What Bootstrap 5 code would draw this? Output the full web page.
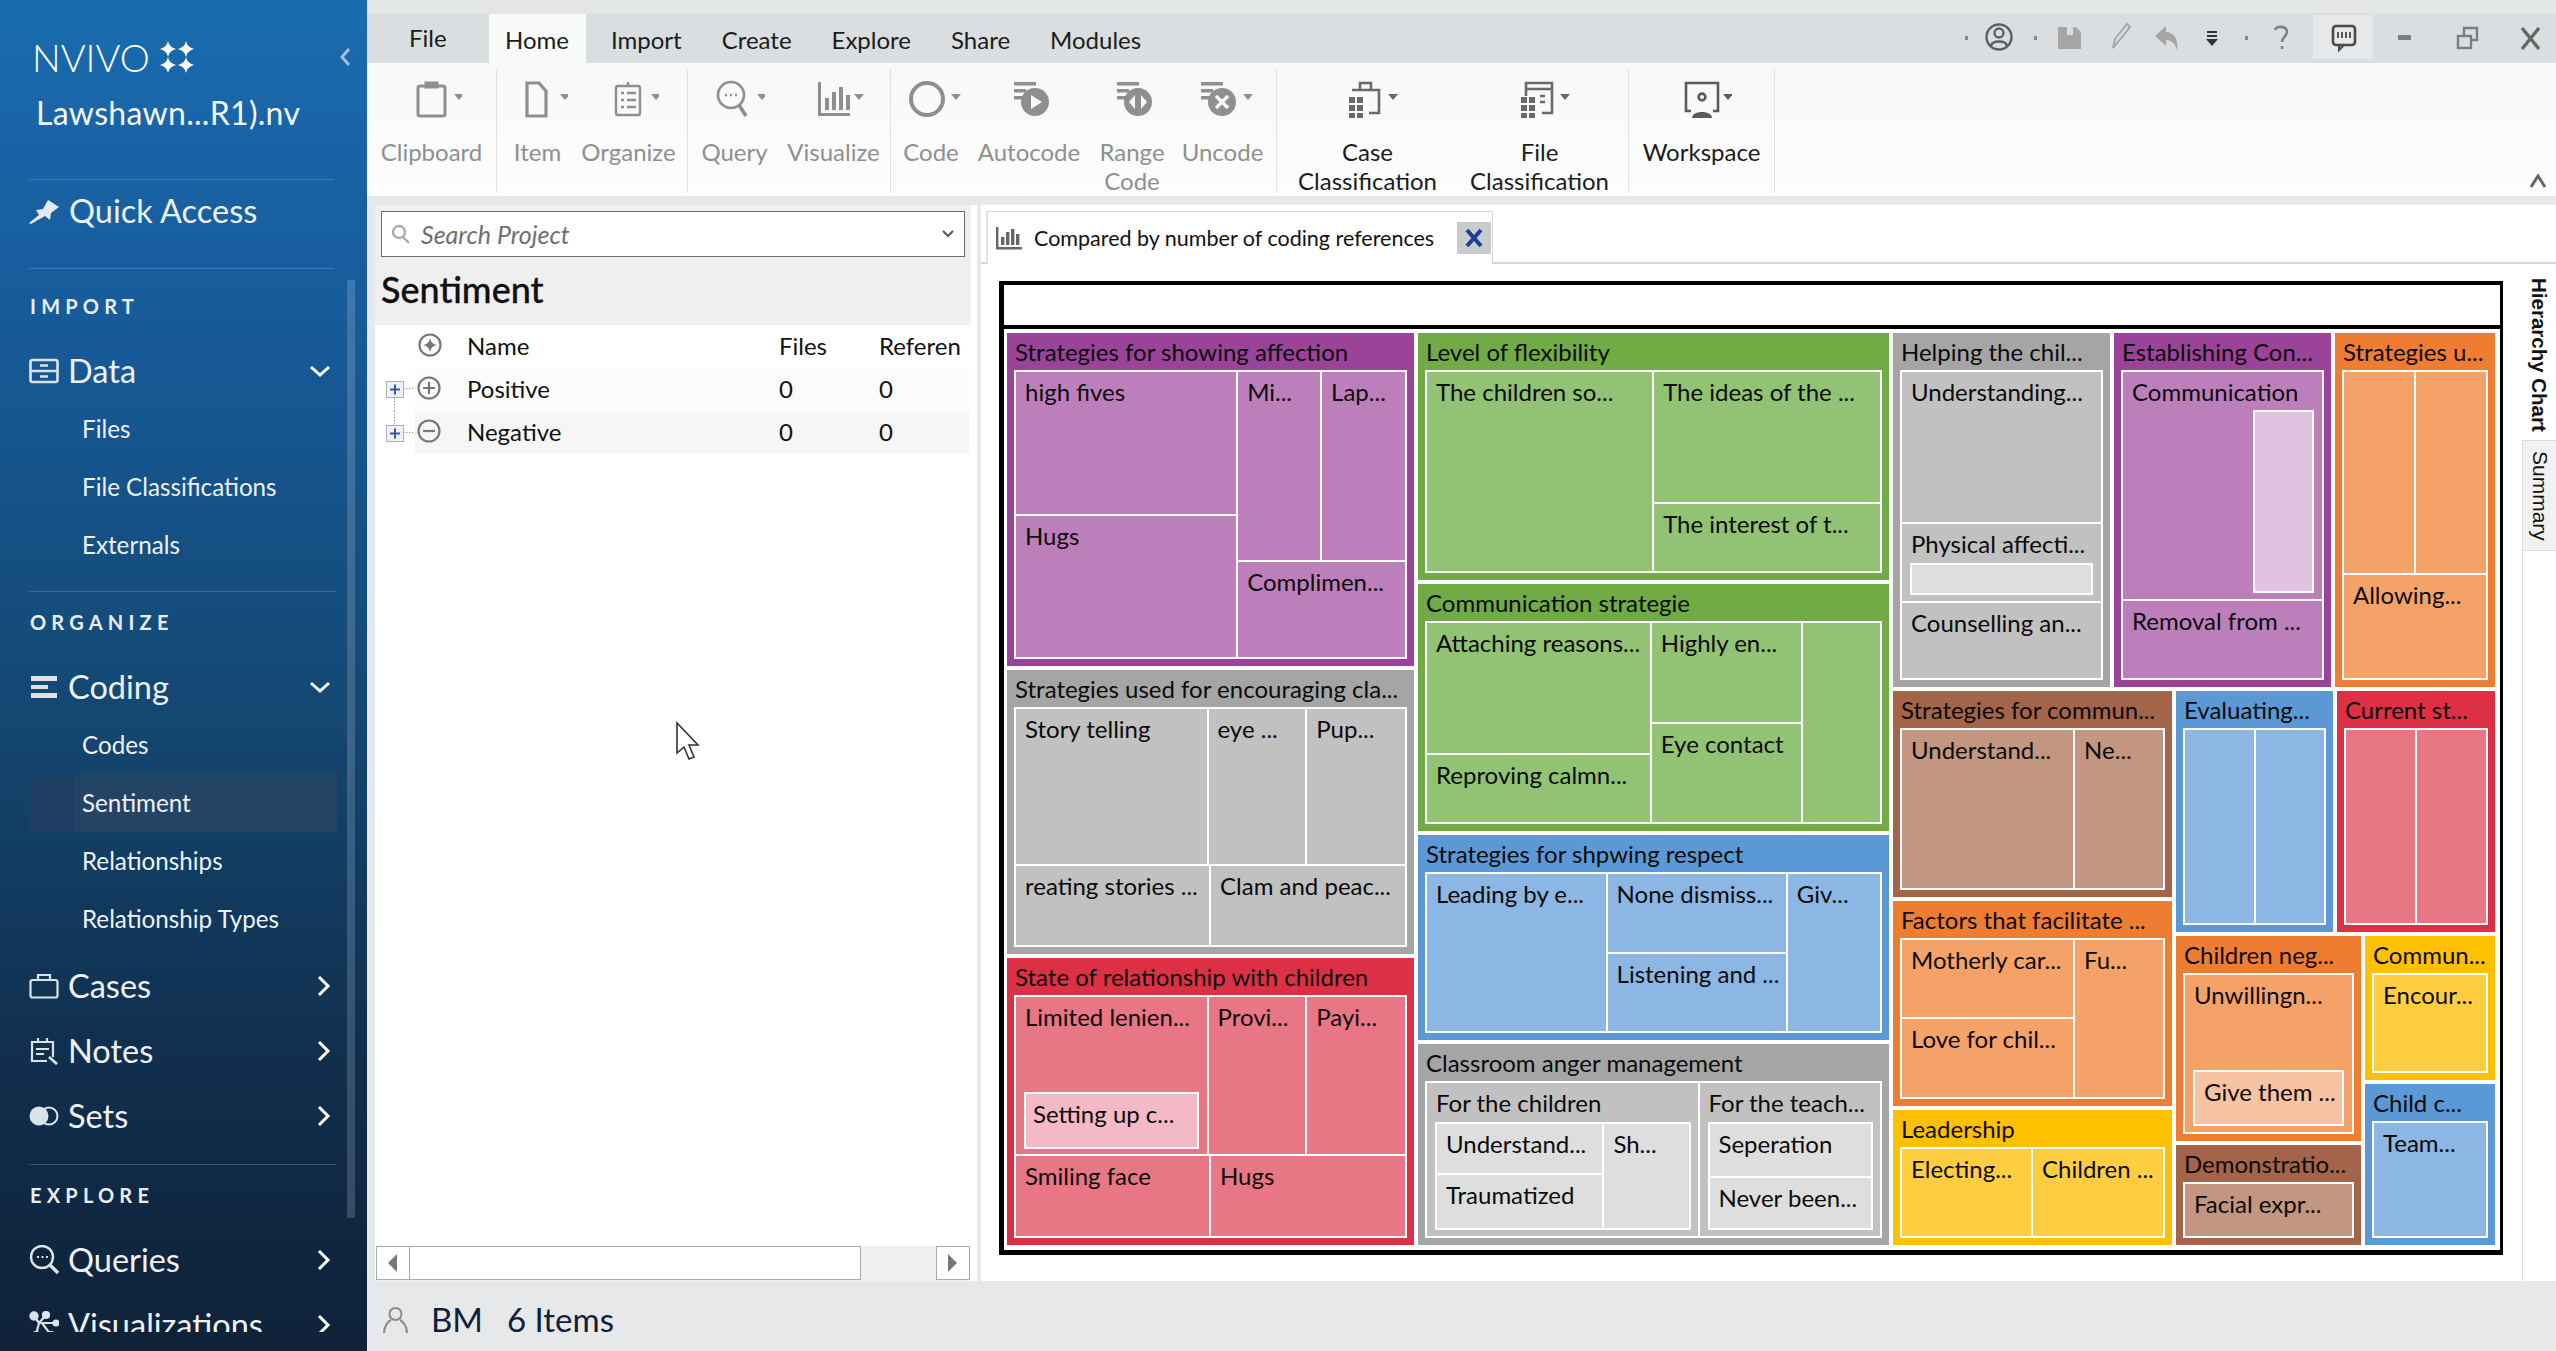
<!DOCTYPE html>
<html lang="en">
<head>
<meta charset="utf-8">
<title>NVivo</title>
<link href="https://cdn.jsdelivr.net/npm/bootstrap@5.3.0/dist/css/bootstrap.min.css" rel="stylesheet">
<style>
html,body{height:100%;margin:0;overflow:hidden}
body{font-family:"Lato","Liberation Sans",sans-serif;font-size:24px;color:#111;background:#e7e8ea}
.app-shell{width:2556px;height:1351px}
/* sidebar */
.sb{width:367px;flex:0 0 367px;height:1351px;color:#eef2f6;background:linear-gradient(180deg,#1a6bb0 0,#175a98 25%,#144873 52%,#112f4e 78%,#0f2238 100%);position:relative;overflow:hidden}
.sb-brand{height:180px;margin:0 33px 0 29px;border-bottom:1px solid rgba(255,255,255,.18);position:relative}
.sb-logo{position:absolute;left:3px;top:34px;font-size:38px;font-weight:300;color:#fff;line-height:46px;letter-spacing:0}
.sb-stars{position:absolute;left:130px;top:41px}
.sb-file{position:absolute;left:7px;top:90px;font-size:32px;line-height:46px;color:#f4f7fa;letter-spacing:.3px;white-space:nowrap}
.sb-collapse{position:absolute;left:309px;top:46px}
.sb-quick{height:89px;margin:0 33px 0 29px;padding-bottom:26px;border-bottom:1px solid rgba(255,255,255,.18);font-size:32.5px;gap:10px}
.sb-nav{margin-left:29px;width:308px;height:1063px;overflow:hidden}
.sb-lbl{height:30px;flex:0 0 30px;line-height:30px;margin:22px 0 23px 1px;font-size:20px;letter-spacing:5.2px;font-weight:700;color:#e8eef3}
.sb-hr{border-top:1px solid rgba(255,255,255,.16);margin-top:6px}
.sb-hr.sb-hr-lo{margin-top:10px}
.sb-hr+.sb-lbl{margin-top:15px}
.sb-main{height:54px;flex:0 0 54px;margin-bottom:11px;font-size:32.5px;line-height:54px;white-space:nowrap}
.sb-main .sb-ic{width:30px;flex:0 0 30px;margin-right:9px}
.sb-main .sb-arrow{margin-left:auto;margin-right:6px}
.sb-subs{margin:-9px 0 11px}
.sb-sub{height:58px;line-height:58px;padding-left:53px;font-size:24.2px;color:#eef2f6}
.sb-sub.sel{background:linear-gradient(90deg,#1e3f63 0,#1e3f63 46px,#244466 46px)}
.sb-bar{position:absolute;left:347px;top:280px;width:8px;height:938px;background:rgba(255,255,255,.17)}
/* top */
.rt{width:2189px;flex:0 0 2189px}
.rt-top{height:63px;background:linear-gradient(180deg,#e3e5e6 0,#e3e5e6 13px,#dbdee0 14px,#dbdee0 100%)}
.rt-tab{height:49px;margin-top:14px;line-height:52px;color:#1c1c1c;white-space:nowrap}
.rt-file{margin-left:42px;width:80px;line-height:48px}
.rt-home{width:97px;padding-left:16px;background:#f9fafa}
.rt-import{margin-left:25px}
.rt-gap{margin-left:40px}
.rt-strip{margin-left:auto;flex:0 0 606px}
.rb{height:133px;background:linear-gradient(180deg,#f7f8f8,#fdfdfd);position:relative}
.rb-group{height:124px;margin-top:6px;border-right:1px solid #dfe1e2}
.rb-btn{text-align:center;color:#8f8f8f;padding-top:11px;line-height:29px;height:124px}
.rb-btn svg{display:block;margin:0 auto 19px}
.rb-btn.on{color:#1c1c1c}
.w130{width:129px}.w82{width:82px}.w100{width:100px}.w93{width:93px}.w105{width:105px}.w80{width:80px}.w116{width:116px}.w90{width:90px}.w91{width:91px}.w181{width:181px}.w163{width:163px}.w146{width:146px}
.gp-a{width:129.5px}.gp-b{width:191.5px}.gp-c{width:203px}.gp-d{width:386px}.gp-e{width:352px}.gp-f{width:146px}
.rb-up{position:absolute;right:9px;top:110px}
.rb-space{height:9px;background:#e6e8e9}
/* body */
.bd{height:1076px}
.lp{width:602px;margin-left:8px;background:#fff;position:relative}
.lp-head{height:120px;margin-right:6px;background:#efefef;padding:6px 6px 0}
.lp-search{height:46px;background:#fff;border:1.5px solid #6b6b6b;font-style:italic;font-size:25px;color:#6f6f6f;line-height:42px}
.lp-search svg{margin:0 10px 0 9px}
.lp-title{font-size:36px;font-weight:500;color:#111;line-height:44px;margin-top:10px;-webkit-text-stroke:.3px #111}
.lp-row{height:43px;line-height:43px;margin-right:8px}
.lp-tree{width:40px;flex:0 0 40px}
.lp-cells{flex:1;padding-bottom:3px}
.lp-ic{width:30px;flex:0 0 30px;margin-right:22px}
.lp-nm{width:312px;flex:0 0 312px}
.lp-fl{width:100px;flex:0 0 100px}
.lp-bg1{background:#fbfbfb}.lp-bg2{background:#f6f6f6}
.lp-list{flex:1}
.lp-sc{height:35px;margin:0 7px 0 1px;background:#efefef}
.lp-sc-b{width:34px;height:34px;border:1px solid #aaa;background:#fff;flex:0 0 34px}
.lp-sc-t{width:452px;height:34px;border:1px solid #aaa;background:#fff;flex:0 0 452px;margin-left:-1px}
.lp-cur{position:absolute;left:300px;top:516px}
.mp{margin-left:4px;width:1575px;background:#fff}
.mp-tabs{height:59px;border-bottom:2px solid #d5d6d7;padding-left:5px}
.mp-tab{width:507px;height:53px;margin-top:6px;border:1px solid #d5d6d7;border-bottom:0;border-left:2px solid #e3e3e3;background:#fff;margin-bottom:-2px;font-size:21.5px;color:#111;padding-left:7px}
.mp-tab svg{margin-right:11px}
.mp-x{width:34px;height:32px;background:#c9cbcd;margin-left:auto;margin-right:1px}
.mp-x svg{margin-right:0}
.mp-main{height:1017px}
.tm-frame{width:1504px;height:974px;margin:17px 0 0 18px;border-style:solid;border-color:#000;border-width:4px 3px 5px 5px;background:#fff}
.tm-head{height:44px;border-bottom:4px solid #000;box-sizing:border-box}
.tm-body{padding:4px 5px 5px 3px;gap:4px;height:921px}
.tmc{gap:4px}
.tr-g{padding:0 7px 7px;display:flex;flex-direction:column;background:var(--g);flex:none;overflow:hidden}
.tr-t{height:37px;flex:0 0 37px;line-height:37px;padding-left:1px;white-space:nowrap;overflow:hidden;color:#0b0b0b}
.tr-in{flex:1 1 0;min-height:0;border:2px solid #fff;background:#fff;display:flex;gap:2px}
.tv,.th{display:flex;gap:2px;min-width:0;min-height:0}
.tv{flex-direction:column}
.tc{background:var(--c);padding:5px 9px 0;line-height:29px;white-space:nowrap;overflow:hidden;min-width:0;min-height:0;display:flex;flex-direction:column;color:#0b0b0b}
.tr-in.tv{flex-direction:column}
.tn{border:2.5px solid #fff;background:var(--l);padding:5px 7px 0;white-space:nowrap;overflow:hidden;box-sizing:border-box}
.tn-set{margin:auto -1px 5px -1px;height:57px;padding-top:5px}
.tn-com{margin:4px -1px 6px auto;width:61px;flex:1}
.tn-phy{margin:5px -1px 6px;flex:1}
.tn-give{margin:auto -1px 6px;height:56px;padding-top:5px;padding-left:9px}
.tc-sub{padding-bottom:6px}
.tc-sub .tsb{flex:1;min-height:0;margin-top:5px;margin-right:-2px;margin-left:-1px;background:#fff;border:2px solid #fff;display:flex;gap:2px}
.tc-sub .tc{--c:var(--l)}
.c-pur{--g:#9a4399;--c:#bd7fbc;--l:#e3c1e1}
.c-gry{--g:#a5a5a5;--c:#c1c1c1;--l:#dedede}
.c-grn{--g:#70ab45;--c:#92c273;--l:#c9e0b8}
.c-red{--g:#dd3044;--c:#e87685;--l:#f4b9c6}
.c-org{--g:#ef7d31;--c:#f4a268;--l:#f8c3a2}
.c-blu{--g:#5b99d6;--c:#8cb6e3;--l:#c5daf1}
.c-brn{--g:#a3644a;--c:#c29680;--l:#e0cabf}
.c-yel{--g:#ffc000;--c:#ffce40;--l:#ffe69f}
.sd{width:34px;flex:0 0 34px;margin-left:19px;font-family:"Liberation Sans",sans-serif;color:#111}
.sd-a{height:176px;writing-mode:vertical-rl;padding-top:14px;font-weight:700;font-size:20.5px;line-height:34px;white-space:nowrap;text-align:left;border-left:1px solid transparent}
.sd-b{height:111px;writing-mode:vertical-rl;padding-top:10px;font-size:21px;line-height:32px;white-space:nowrap;background:#f1f1f1;border:1px solid #dcdcdc;border-right:0}
.sd-c{flex:1;border-left:1px solid #dcdcdc}
.st{height:70px;font-size:33px;color:#0f1f3a;padding:8px 0 0 16px}
.st svg{margin-right:23px}
.st span+span{margin-left:24px}
</style>
</head>
<body>
<div class="app-shell d-flex">
  <aside class="sb">
    <div class="sb-brand">
      <span class="sb-logo">NVIVO</span>
      <svg class="sb-stars" width="36" height="32" viewBox="0 0 36 32" fill="#fff"><path d="M9 0Q10 6 17 8Q10 10 9 16Q8 10 1 8Q8 6 9 0z"/><path d="M27 0Q28 6 35 8Q28 10 27 16Q26 10 19 8Q26 6 27 0z"/><path d="M9 16Q10 22 17 24Q10 26 9 32Q8 26 1 24Q8 22 9 16z"/><path d="M27 16Q28 22 35 24Q28 26 27 32Q26 26 19 24Q26 22 27 16z"/></svg>
      <span class="sb-file">Lawshawn...R1).nv</span>
      <svg class="sb-collapse" width="14" height="22" viewBox="0 0 14 22" fill="none" stroke="#a6bfd6" stroke-width="3"><path d="M11 3 4 11l7 8"/></svg>
    </div>
    <div class="sb-quick d-flex align-items-center">
      <svg width="30" height="26" viewBox="0 0 30 26" fill="#e4e9ee"><path d="M0 25 10 17 7 12 14 11 19 2 30 9 22 15 21 22 16 18 2 26z"/></svg>
      <span>Quick Access</span>
    </div>
    <div class="sb-nav d-flex flex-column">
      <div class="sb-lbl">IMPORT</div>
      <div class="sb-main d-flex align-items-center">
        <svg class="sb-ic" height="26" viewBox="0 0 30 26" fill="none" stroke="#dbe3ea" stroke-width="2.6"><rect x="1.5" y="2" width="27" height="22" rx="2"/><path d="M2 13h26M11 7.5h8M11 18.5h8"/></svg>
        <span>Data</span>
        <svg class="sb-arrow" width="22" height="14" viewBox="0 0 22 14" fill="none" stroke="#fff" stroke-width="3"><path d="M2 3l9 8 9-8"/></svg>
      </div>
      <div class="sb-subs">
        <div class="sb-sub">Files</div>
        <div class="sb-sub">File Classifications</div>
        <div class="sb-sub">Externals</div>
      </div>
      <div class="sb-hr"></div>
      <div class="sb-lbl">ORGANIZE</div>
      <div class="sb-main d-flex align-items-center">
        <svg class="sb-ic" height="24" viewBox="0 0 30 24" fill="#dbe3ea"><rect x="2" y="1" width="26" height="5"/><rect x="2" y="10" width="17" height="4"/><rect x="2" y="18" width="26" height="5"/></svg>
        <span>Coding</span>
        <svg class="sb-arrow" width="22" height="14" viewBox="0 0 22 14" fill="none" stroke="#fff" stroke-width="3"><path d="M2 3l9 8 9-8"/></svg>
      </div>
      <div class="sb-subs">
        <div class="sb-sub">Codes</div>
        <div class="sb-sub sel">Sentiment</div>
        <div class="sb-sub">Relationships</div>
        <div class="sb-sub">Relationship Types</div>
      </div>
      <div class="sb-main d-flex align-items-center">
        <svg class="sb-ic" height="26" viewBox="0 0 30 26" fill="none" stroke="#dbe3ea" stroke-width="2.2"><rect x="1.5" y="7" width="27" height="17.5" rx="2"/><path d="M9 7V2h12v5"/></svg>
        <span>Cases</span>
        <svg class="sb-arrow" width="14" height="22" viewBox="0 0 14 22" fill="none" stroke="#fff" stroke-width="3"><path d="M2 2l9 9-9 9"/></svg>
      </div>
      <div class="sb-main d-flex align-items-center">
        <svg class="sb-ic" height="28" viewBox="0 0 30 28" fill="none" stroke="#dbe3ea" stroke-width="2.2"><path d="M24 20V5H3v19h15M9 1v5M18 1v5M7 12h13M7 17h8"/><path d="M20 20l8 7" stroke-width="2.8"/></svg>
        <span>Notes</span>
        <svg class="sb-arrow" width="14" height="22" viewBox="0 0 14 22" fill="none" stroke="#fff" stroke-width="3"><path d="M2 2l9 9-9 9"/></svg>
      </div>
      <div class="sb-main d-flex align-items-center">
        <svg class="sb-ic" height="20" viewBox="0 0 30 20" fill="none" stroke="#dbe3ea" stroke-width="2"><circle cx="20" cy="10" r="8.5"/><circle cx="10" cy="10" r="9.5" fill="#dbe3ea" stroke="none"/></svg>
        <span>Sets</span>
        <svg class="sb-arrow" width="14" height="22" viewBox="0 0 14 22" fill="none" stroke="#fff" stroke-width="3"><path d="M2 2l9 9-9 9"/></svg>
      </div>
      <div class="sb-hr sb-hr-lo"></div>
      <div class="sb-lbl">EXPLORE</div>
      <div class="sb-main d-flex align-items-center">
        <svg class="sb-ic" height="30" viewBox="0 0 30 30" fill="none" stroke="#dbe3ea" stroke-width="2.4"><circle cx="13" cy="12" r="11"/><path d="M21 20l8 8" stroke-width="3.4"/><path d="M8 12h2M12.5 12h2M17 12h2" stroke-width="2.2"/></svg>
        <span>Queries</span>
        <svg class="sb-arrow" width="14" height="22" viewBox="0 0 14 22" fill="none" stroke="#fff" stroke-width="3"><path d="M2 2l9 9-9 9"/></svg>
      </div>
      <div class="sb-main d-flex align-items-center">
        <svg class="sb-ic" height="28" viewBox="0 0 30 28" fill="#dbe3ea" stroke="#dbe3ea" stroke-width="2.2"><circle cx="5" cy="5" r="3.6"/><circle cx="17" cy="4" r="3"/><circle cx="27" cy="12" r="2.5"/><circle cx="7" cy="24" r="3"/><circle cx="22" cy="24" r="3"/><path d="M5 5l5 7 7-8M10 12h17M10 12l-3 12M13 12l9 12" fill="none"/></svg>
        <span>Visualizations</span>
        <svg class="sb-arrow" width="14" height="22" viewBox="0 0 14 22" fill="none" stroke="#fff" stroke-width="3"><path d="M2 2l9 9-9 9"/></svg>
      </div>
    </div>
    <div class="sb-bar"></div>
  </aside>

  <div class="rt d-flex flex-column">
    <div class="rt-top d-flex">
      <div class="rt-tab rt-file">File</div>
      <div class="rt-tab rt-home">Home</div>
      <div class="rt-tab rt-import">Import</div>
      <div class="rt-tab rt-gap">Create</div>
      <div class="rt-tab rt-gap">Explore</div>
      <div class="rt-tab rt-gap">Share</div>
      <div class="rt-tab rt-gap">Modules</div>
      <svg class="rt-strip" width="606" height="63" viewBox="1950 0 606 63">
        <rect x="2313" y="15" width="60" height="44" fill="#e6e8e9"/>
        <g fill="#8a8a8a"><rect x="1965" y="36" width="3" height="4"/><rect x="2034" y="36" width="3" height="4"/><rect x="2245" y="36" width="3" height="4"/></g>
        <g fill="none" stroke="#5f5f5f" stroke-width="2.4"><circle cx="1999" cy="37" r="12.5"/><circle cx="1999" cy="33" r="4.5"/><path d="M1991 46c1-6 15-6 16 0"/></g>
        <path d="M2058 27h18l5 5v17h-23z" fill="#a6a6a6"/><rect x="2067" y="27" width="6" height="8" fill="#dbdee0"/>
        <path d="M2113 48l2-9 12-15 3 3-12 15z" fill="none" stroke="#a6a6a6" stroke-width="2"/>
        <path d="M2155 36l11-10v6c8 0 13 8 11 18-2-7-6-10-11-10v6z" fill="#a6a6a6"/>
        <path d="M2207 31h10v2h-10zM2207 35h10v2h-10zM2206 39h12l-6 7z" fill="#333"/>
        <path d="M2275 30c2-5 12-4 12 2 0 4-5 5-5 10M2282 46v3" fill="none" stroke="#808080" stroke-width="2.6"/>
        <rect x="2333" y="26" width="22" height="19" rx="3" fill="none" stroke="#4a4a4a" stroke-width="2.6"/><path d="M2339 45v5l5-5" fill="none" stroke="#4a4a4a" stroke-width="2"/><path d="M2338 32v6M2342 32v6M2346 32v6M2350 32v6" stroke="#4a4a4a" stroke-width="1.8"/>
        <rect x="2398" y="35" width="13" height="5" fill="#7d7d7d"/>
        <g fill="none" stroke="#7d7d7d" stroke-width="2.4"><rect x="2458" y="36" width="13" height="12"/><path d="M2464 35v-7h13v12h-6"/></g>
        <path d="M2522 28l17 21M2539 28l-17 21" stroke="#666" stroke-width="3.4" fill="none"/>
      </svg>
    </div>

    <div class="rb d-flex">
      <div class="rb-group gp-a"><div class="rb-btn w130">
        <svg width="60" height="38" viewBox="0 0 60 38" fill="none" stroke="#8f8f8f" stroke-width="3"><rect x="16" y="6" width="27" height="30" rx="2"/><path d="M24 7V3h11v4z" fill="#8f8f8f"/><path d="M52 14h10l-5 6z" fill="#8f8f8f" stroke="none"/></svg>Clipboard</div></div>
      <div class="rb-group gp-b d-flex">
        <div class="rb-btn w82"><svg width="60" height="38" viewBox="0 0 60 38" fill="none" stroke="#8f8f8f" stroke-width="3.2"><path d="M19 3h12l7 8v25H19z"/><path d="M52 14h10l-5 6z" fill="#8f8f8f" stroke="none"/></svg>Item</div>
        <div class="rb-btn w100"><svg width="60" height="38" viewBox="0 0 60 38" fill="none" stroke="#8f8f8f" stroke-width="2.4"><rect x="17" y="6" width="24" height="29" rx="2"/><path d="M29 5V2M22 13h3M28 13h9M22 20h3M28 20h9M22 27h3M28 27h9"/><path d="M52 14h10l-5 6z" fill="#8f8f8f" stroke="none"/></svg>Organize</div>
      </div>
      <div class="rb-group gp-c d-flex">
        <div class="rb-btn w93"><svg width="60" height="38" viewBox="0 0 60 38" fill="none" stroke="#8f8f8f" stroke-width="2.6"><circle cx="26" cy="15" r="13"/><path d="M34 25l7 11" stroke-width="3.6"/><path d="M20 15h2M25 15h2M30 15h2"/><path d="M52 14h10l-5 6z" fill="#8f8f8f" stroke="none"/></svg>Query</div>
        <div class="rb-btn w105"><svg width="60" height="38" viewBox="0 0 60 38" fill="#8f8f8f"><path d="M14 2h3v31h29v3H14z"/><rect x="21" y="18" width="4" height="12"/><rect x="28" y="12" width="4" height="18"/><rect x="35" y="7" width="4" height="23"/><rect x="42" y="15" width="4" height="15"/><path d="M50 14h10l-5 6z"/></svg>Visualize</div>
      </div>
      <div class="rb-group gp-d d-flex">
        <div class="rb-btn w80"><svg width="60" height="38" viewBox="0 0 60 38" fill="none" stroke="#8f8f8f" stroke-width="4"><circle cx="26" cy="19" r="16"/><path d="M50 14h10l-5 6z" fill="#8f8f8f" stroke="none"/></svg>Code</div>
        <div class="rb-btn w116"><svg width="60" height="38" viewBox="0 0 60 38" fill="#8f8f8f"><rect x="15" y="2" width="22" height="3.5"/><rect x="15" y="9" width="12" height="3.5"/><rect x="15" y="16" width="9" height="3.5"/><circle cx="36" cy="22" r="14"/><path d="M32 15l11 7-11 7z" fill="#f9fafa"/></svg>Autocode</div>
        <div class="rb-btn w90"><svg width="60" height="38" viewBox="0 0 60 38" fill="#8f8f8f"><rect x="15" y="2" width="22" height="3.5"/><rect x="15" y="9" width="12" height="3.5"/><rect x="15" y="16" width="9" height="3.5"/><circle cx="36" cy="22" r="14"/><path d="M33 15l-6 7 6 7zM39 15l6 7-6 7z" fill="#f9fafa"/></svg>Range<br>Code</div>
        <div class="rb-btn w91"><svg width="60" height="38" viewBox="0 0 60 38" fill="#8f8f8f"><rect x="8" y="2" width="22" height="3.5"/><rect x="8" y="9" width="12" height="3.5"/><rect x="8" y="16" width="9" height="3.5"/><circle cx="29" cy="22" r="14"/><path d="M23 16l12 12M35 16L23 28" stroke="#f9fafa" stroke-width="3.4"/><path d="M50 14h10l-5 6z"/></svg>Uncode</div>
      </div>
      <div class="rb-group gp-e d-flex">
        <div class="rb-btn w181 on"><svg width="60" height="38" viewBox="0 0 60 38" fill="none" stroke="#6a6a6a" stroke-width="2.6"><path d="M14 10h27v23H31M22 10V3h11v7"/><g fill="#6a6a6a" stroke="none"><rect x="11" y="17" width="6" height="6"/><rect x="19" y="17" width="6" height="6"/><rect x="11" y="25" width="6" height="6"/><rect x="19" y="25" width="6" height="6"/><rect x="11" y="33" width="6" height="5"/><rect x="19" y="33" width="6" height="5"/><path d="M50 14h10l-5 6z"/></g></svg>Case<br>Classification</div>
        <div class="rb-btn w163 on"><svg width="60" height="38" viewBox="0 0 60 38" fill="none" stroke="#6a6a6a" stroke-width="2.6"><path d="M16 16V3h26v30H32M16 9h26M30 16h5M35 22h-5"/><g fill="#6a6a6a" stroke="none"><rect x="11" y="17" width="6" height="6"/><rect x="19" y="17" width="6" height="6"/><rect x="11" y="25" width="6" height="6"/><rect x="19" y="25" width="6" height="6"/><rect x="11" y="33" width="6" height="5"/><rect x="19" y="33" width="6" height="5"/><path d="M50 14h10l-5 6z"/></g></svg>File<br>Classification</div>
      </div>
      <div class="rb-group gp-f d-flex">
        <div class="rb-btn w146 on"><svg width="60" height="38" viewBox="0 0 60 38" fill="none" stroke="#5a5a5a" stroke-width="2.6"><path d="M19 31h-5V3h32v28h-5"/><circle cx="30" cy="17" r="3.4"/><path d="M20 38c0-8 20-8 20 0z" fill="#5a5a5a" stroke="none"/><path d="M51 14h10l-5 6z" fill="#5a5a5a" stroke="none"/></svg>Workspace</div>
      </div>
      <svg class="rb-up" width="18" height="16" viewBox="0 0 18 16" fill="none" stroke="#666" stroke-width="3"><path d="M2 14 9 3l7 11"/></svg>
    </div>
    <div class="rb-space"></div>

    <div class="bd d-flex">
      <section class="lp d-flex flex-column">
        <div class="lp-head">
          <div class="lp-search d-flex align-items-center">
            <svg width="20" height="20" viewBox="0 0 20 20" fill="none" stroke="#aaa" stroke-width="2.4"><circle cx="8" cy="8" r="6"/><path d="M12 13l6 6"/></svg>
            <span>Search Project</span>
            <svg class="ms-auto" width="12" height="8" viewBox="0 0 12 8" fill="none" stroke="#555" stroke-width="2"><path d="M1 1l5 5 5-5"/></svg>
          </div>
          <div class="lp-title">Sentiment</div>
        </div>
        <div class="lp-list">
          <div class="lp-row d-flex">
            <div class="lp-tree"></div>
            <div class="lp-cells d-flex align-items-center">
              <svg class="lp-ic" height="24" viewBox="0 0 30 24"><circle cx="15" cy="12" r="10.5" fill="none" stroke="#777" stroke-width="2.2"/><path d="M15 5q1 6 7 7-6 1-7 7-1-6-7-7 6-1 7-7z" fill="#777"/></svg>
              <div class="lp-nm">Name</div><div class="lp-fl">Files</div><div>Referen</div>
            </div>
          </div>
          <div class="lp-row d-flex">
            <svg class="lp-tree" height="43" viewBox="0 0 40 43"><path d="M19.5 21v22M28 20.5h10" stroke="#999" stroke-dasharray="1.5 1.5" fill="none"/><rect x="11.5" y="13.5" width="17" height="16" fill="#eef1f5" stroke="#a9b0ba"/><path d="M15 21.5h10M20 16.5v10" stroke="#3a5aa0" stroke-width="2"/></svg>
            <div class="lp-cells lp-bg1 d-flex align-items-center">
              <svg class="lp-ic" height="24" viewBox="0 0 30 24"><circle cx="14" cy="12" r="10.5" fill="none" stroke="#777" stroke-width="2.2"/><path d="M14 6v12M8 12h12" stroke="#777" stroke-width="2.2"/></svg>
              <div class="lp-nm">Positive</div><div class="lp-fl">0</div><div>0</div>
            </div>
          </div>
          <div class="lp-row d-flex">
            <svg class="lp-tree" height="43" viewBox="0 0 40 43"><path d="M19.5 0v14M28 21.5h10" stroke="#999" stroke-dasharray="1.5 1.5" fill="none"/><rect x="11.5" y="14.5" width="17" height="16" fill="#eef1f5" stroke="#a9b0ba"/><path d="M15 22.5h10M20 17.5v10" stroke="#3a5aa0" stroke-width="2"/></svg>
            <div class="lp-cells lp-bg2 d-flex align-items-center">
              <svg class="lp-ic" height="24" viewBox="0 0 30 24"><circle cx="14" cy="12" r="10.5" fill="none" stroke="#777" stroke-width="2.2"/><path d="M8 12h12" stroke="#777" stroke-width="2.2"/></svg>
              <div class="lp-nm">Negative</div><div class="lp-fl">0</div><div>0</div>
            </div>
          </div>
        </div>
        <div class="lp-sc d-flex">
          <div class="lp-sc-b d-flex align-items-center justify-content-center"><svg width="10" height="18" viewBox="0 0 10 18"><path d="M9 0v18L0 9z" fill="#777"/></svg></div>
          <div class="lp-sc-t"></div>
          <div class="lp-sc-b ms-auto d-flex align-items-center justify-content-center"><svg width="10" height="18" viewBox="0 0 10 18"><path d="M0 0v18l9-9z" fill="#777"/></svg></div>
        </div>
        <svg class="lp-cur" width="26" height="40" viewBox="0 0 26 40" fill="#fff" stroke="#333" stroke-width="1.6"><path d="M2 2v30l7-6 5 12 5-2-5-12h9z"/></svg>
      </section>

      <section class="mp d-flex flex-column">
        <div class="mp-tabs d-flex">
          <div class="mp-tab d-flex align-items-center">
            <svg width="28" height="24" viewBox="0 0 28 24" fill="#666"><path d="M1 1h2.4v20H27v2.4H1z"/><rect x="6" y="11" width="3.4" height="8"/><rect x="11" y="6" width="3.4" height="13"/><rect x="16" y="3" width="3.4" height="16"/><rect x="21" y="8" width="3.4" height="11"/></svg>
            <span>Compared by number of coding references</span>
            <div class="mp-x d-flex align-items-center justify-content-center"><svg width="18" height="20" viewBox="0 0 18 20"><path d="M2 2l14 16M16 2L2 18" stroke="#1c3f8f" stroke-width="4"/></svg></div>
          </div>
        </div>
        <div class="mp-main d-flex">
          <div class="tm-frame">
            <div class="tm-head"></div>
            <div class="tm-body d-flex">
              <!-- column 1 -->
              <div class="tmc d-flex flex-column">
                <div class="tr-g c-pur" style="width:407px;height:333px"><div class="tr-t">Strategies for showing affection</div>
                  <div class="tr-in">
                    <div class="tv" style="flex:224 224 224px"><div class="tc" style="flex:144 144 144px">high fives</div><div class="tc" style="flex:144 144 144px">Hugs</div></div>
                    <div class="tv" style="flex:169 169 169px"><div class="th" style="flex:192 192 192px"><div class="tc" style="flex:84 84 84px">Mi...</div><div class="tc" style="flex:85 85 85px">Lap...</div></div><div class="tc" style="flex:96 96 96px">Complimen...</div></div>
                  </div></div>
                <div class="tr-g c-gry" style="width:407px;height:284px"><div class="tr-t">Strategies used for encouraging cla...</div>
                  <div class="tr-in tv">
                    <div class="th" style="flex:160 160 160px"><div class="tc" style="flex:196 196 196px">Story telling</div><div class="tc" style="flex:98 98 98px">eye ...</div><div class="tc" style="flex:99 99 99px">Pup...</div></div>
                    <div class="th" style="flex:80 80 80px"><div class="tc" style="flex:196 196 196px">reating stories ...</div><div class="tc" style="flex:197 197 197px">Clam and peac...</div></div>
                  </div></div>
                <div class="tr-g c-red" style="width:407px;height:287px"><div class="tr-t">State of relationship with children</div>
                  <div class="tr-in tv">
                    <div class="th" style="flex:160 160 160px"><div class="tc" style="flex:196 196 196px"><span>Limited lenien...</span><div class="tn tn-set">Setting up c...</div></div><div class="tc" style="flex:98 98 98px">Provi...</div><div class="tc" style="flex:99 99 99px">Payi...</div></div>
                    <div class="th" style="flex:81 81 81px"><div class="tc" style="flex:196 196 196px">Smiling face</div><div class="tc" style="flex:197 197 197px">Hugs</div></div>
                  </div></div>
              </div>
              <!-- column 2 -->
              <div class="tmc d-flex flex-column">
                <div class="tr-g c-grn" style="width:471px;height:247px"><div class="tr-t">Level of flexibility</div>
                  <div class="tr-in">
                    <div class="tc" style="flex:228 228 228px">The children so...</div>
                    <div class="tv" style="flex:229 229 229px"><div class="tc" style="flex:134 134 134px">The ideas of the ...</div><div class="tc" style="flex:68 68 68px">The interest of t...</div></div>
                  </div></div>
                <div class="tr-g c-grn" style="width:471px;height:247px"><div class="tr-t">Communication strategie</div>
                  <div class="tr-in">
                    <div class="tv" style="flex:228 228 228px"><div class="tc" style="flex:133 133 133px">Attaching reasons...</div><div class="tc" style="flex:68 68 68px">Reproving calmn...</div></div>
                    <div class="tv" style="flex:152 152 152px"><div class="tc" style="flex:100 100 100px">Highly en...</div><div class="tc" style="flex:100 100 100px">Eye contact</div></div>
                    <div class="tc" style="flex:77 77 77px"></div>
                  </div></div>
                <div class="tr-g c-blu" style="width:471px;height:205px"><div class="tr-t">Strategies for shpwing respect</div>
                  <div class="tr-in">
                    <div class="tc" style="flex:182 182 182px">Leading by e...</div>
                    <div class="tv" style="flex:182 182 182px"><div class="tc" style="flex:80 80 80px">None dismiss...</div><div class="tc" style="flex:80 80 80px">Listening and ...</div></div>
                    <div class="tc" style="flex:93 93 93px">Giv...</div>
                  </div></div>
                <div class="tr-g c-gry" style="width:471px;height:201px"><div class="tr-t">Classroom anger management</div>
                  <div class="tr-in">
                    <div class="tc tc-sub" style="flex:274 274 274px"><span>For the children</span>
                      <div class="tsb"><div class="tv" style="flex:170 170 170px"><div class="tc" style="flex:51 51 51px">Understand...</div><div class="tc" style="flex:55 55 55px">Traumatized</div></div><div class="tc" style="flex:85 85 85px">Sh...</div></div></div>
                    <div class="tc tc-sub" style="flex:182 182 182px"><span>For the teach...</span>
                      <div class="tsb tv"><div class="tc" style="flex:54 54 54px">Seperation</div><div class="tc" style="flex:52 52 52px">Never been...</div></div></div>
                  </div></div>
              </div>
              <!-- column 3 -->
              <div class="tmc d-flex flex-column">
                <div class="tmc d-flex">
                  <div class="tr-g c-gry" style="width:217px;height:354px"><div class="tr-t">Helping the chil...</div>
                    <div class="tr-in tv">
                      <div class="tc" style="flex:155 155 155px">Understanding...</div>
                      <div class="tc" style="flex:78 78 78px"><span>Physical affecti...</span><div class="tn tn-phy"></div></div>
                      <div class="tc" style="flex:76 76 76px">Counselling an...</div>
                    </div></div>
                  <div class="tr-g c-pur" style="width:217px;height:354px"><div class="tr-t">Establishing Con...</div>
                    <div class="tr-in tv">
                      <div class="tc" style="flex:232 232 232px"><span>Communication</span><div class="tn tn-com"></div></div>
                      <div class="tc" style="flex:78 78 78px">Removal from ...</div>
                    </div></div>
                  <div class="tr-g c-org" style="width:160px;height:354px"><div class="tr-t">Strategies u...</div>
                    <div class="tr-in tv">
                      <div class="th" style="flex:206 206 206px"><div class="tc" style="flex:73 73 73px"></div><div class="tc" style="flex:73 73 73px"></div></div>
                      <div class="tc" style="flex:104 104 104px">Allowing...</div>
                    </div></div>
                </div>
                <div class="tmc d-flex">
                  <div class="tmc d-flex flex-column">
                    <div class="tr-g c-brn" style="width:279px;height:206px"><div class="tr-t">Strategies for commun...</div>
                      <div class="tr-in"><div class="tc" style="flex:176 176 176px">Understand...</div><div class="tc" style="flex:89 89 89px">Ne...</div></div></div>
                    <div class="tr-g c-org" style="width:279px;height:205px"><div class="tr-t">Factors that facilitate ...</div>
                      <div class="tr-in"><div class="tv" style="flex:176 176 176px"><div class="tc" style="flex:80 80 80px">Motherly car...</div><div class="tc" style="flex:81 81 81px">Love for chil...</div></div><div class="tc" style="flex:89 89 89px">Fu...</div></div></div>
                    <div class="tr-g c-yel" style="width:279px;height:135px"><div class="tr-t">Leadership</div>
                      <div class="tr-in"><div class="tc" style="flex:132 132 132px">Electing...</div><div class="tc" style="flex:133 133 133px">Children ...</div></div></div>
                  </div>
                  <div class="tmc d-flex flex-column">
                    <div class="tmc d-flex">
                      <div class="tr-g c-blu" style="width:157px;height:241px"><div class="tr-t">Evaluating...</div>
                        <div class="tr-in"><div class="tc" style="flex:72 72 72px"></div><div class="tc" style="flex:71 71 71px"></div></div></div>
                      <div class="tr-g c-red" style="width:158px;height:241px"><div class="tr-t">Current st...</div>
                        <div class="tr-in"><div class="tc" style="flex:72 72 72px"></div><div class="tc" style="flex:72 72 72px"></div></div></div>
                    </div>
                    <div class="tmc d-flex">
                      <div class="tmc d-flex flex-column">
                        <div class="tr-g c-org" style="width:185px;height:205px"><div class="tr-t">Children neg...</div>
                          <div class="tr-in"><div class="tc" style="flex:1 1 0"><span>Unwillingn...</span><div class="tn tn-give">Give them ...</div></div></div></div>
                        <div class="tr-g c-brn" style="width:185px;height:100px"><div class="tr-t">Demonstratio...</div>
                          <div class="tr-in"><div class="tc" style="flex:1 1 0">Facial expr...</div></div></div>
                      </div>
                      <div class="tmc d-flex flex-column">
                        <div class="tr-g c-yel" style="width:130px;height:144px"><div class="tr-t">Commun...</div>
                          <div class="tr-in"><div class="tc" style="flex:1 1 0">Encour...</div></div></div>
                        <div class="tr-g c-blu" style="width:130px;height:161px"><div class="tr-t">Child c...</div>
                          <div class="tr-in"><div class="tc" style="flex:1 1 0">Team...</div></div></div>
                      </div>
                    </div>
                  </div>
                </div>
              </div>
            </div>
          </div>
          <div class="sd d-flex flex-column">
            <div class="sd-a">Hierarchy Chart</div>
            <div class="sd-b">Summary</div>
            <div class="sd-c"></div>
          </div>
        </div>
      </section>
    </div>

    <div class="st d-flex align-items-center">
      <svg width="25" height="28" viewBox="0 0 25 28" fill="none" stroke="#8a8a8a" stroke-width="2"><circle cx="12.5" cy="8" r="6"/><path d="M1 27c0-8 5-12 7-13M24 27c0-8-5-12-7-13"/></svg>
      <span>BM</span><span>6 Items</span>
    </div>
  </div>
</div>
<script src="https://cdn.jsdelivr.net/npm/bootstrap@5.3.0/dist/js/bootstrap.bundle.min.js"></script>
</body>
</html>
